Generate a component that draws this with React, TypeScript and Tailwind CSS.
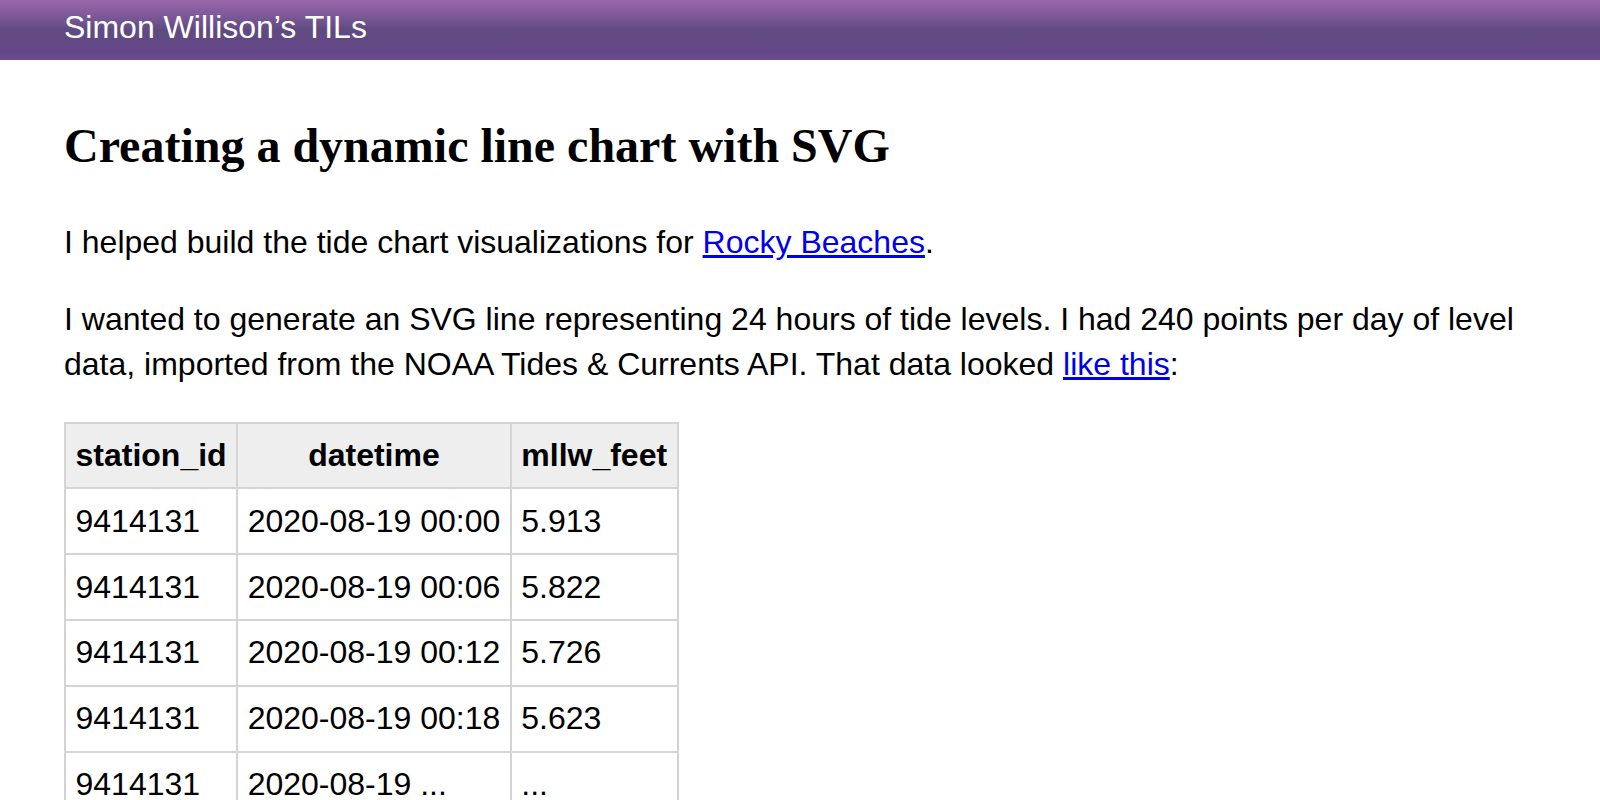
const rows = [
  ["9414131", "2020-08-19 00:00", "5.913"],
  ["9414131", "2020-08-19 00:06", "5.822"],
  ["9414131", "2020-08-19 00:12", "5.726"],
  ["9414131", "2020-08-19 00:18", "5.623"],
  ["9414131", "2020-08-19 ...", "..."],
];

export default function App() {
  return (
    <div className="min-h-screen bg-white font-['Liberation_Sans',Arial,sans-serif] text-[32px] leading-[1.4] text-black">
      <header className="h-[60px] bg-[linear-gradient(to_bottom,#9a67ab_0%,#7e5a99_25%,#5f4a80_50%,#654788_85%,#6a4c8a_100%)] px-[64px]">
        <a href="#" className="block leading-[54px] text-white">
          Simon Willison’s TILs
        </a>
      </header>

      <main className="px-[64px]">
        <h1 className="mt-[52px] mb-[41px] font-['Liberation_Serif','Times_New_Roman',serif] text-[48px] font-bold leading-[1.4]">
          Creating a dynamic line chart with SVG
        </h1>

        <p className="mb-[32px]">
          I helped build the tide chart visualizations for{" "}
          <a href="#" className="text-[#0000ee] underline">
            Rocky Beaches
          </a>
          .
        </p>

        <p className="mb-[35px]">
          I wanted to generate an SVG line representing 24 hours of tide levels. I had 240 points per day of level
          data, imported from the NOAA Tides &amp; Currents API. That data looked{" "}
          <a href="#" className="text-[#0000ee] underline">
            like this
          </a>
          :
        </p>

        <table className="border-collapse">
          <thead>
            <tr>
              <th className="border-2 border-[#d4d4d4] bg-[#eeeeee] px-[9.5px] py-[9.5px] font-bold">station_id</th>
              <th className="border-2 border-[#d4d4d4] bg-[#eeeeee] px-[9.5px] py-[9.5px] font-bold">datetime</th>
              <th className="border-2 border-[#d4d4d4] bg-[#eeeeee] px-[9.5px] py-[9.5px] font-bold">mllw_feet</th>
            </tr>
          </thead>
          <tbody>
            {rows.map((r, i) => (
              <tr key={i}>
                {r.map((c, j) => (
                  <td key={j} className="border-2 border-[#d4d4d4] px-[9.5px] py-[9.5px] text-left">
                    {c}
                  </td>
                ))}
              </tr>
            ))}
          </tbody>
        </table>
      </main>
    </div>
  );
}
